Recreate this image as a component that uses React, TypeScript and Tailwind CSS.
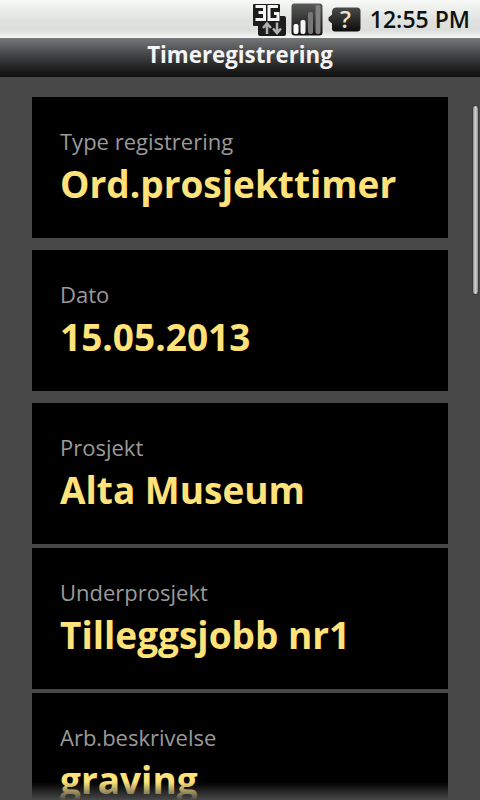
const rows = [
  { label: "Type registrering", value: "Ord.prosjekttimer", gap: "mb-3" },
  { label: "Dato", value: "15.05.2013", gap: "mb-3" },
  { label: "Prosjekt", value: "Alta Museum", gap: "mb-1" },
  { label: "Underprosjekt", value: "Tilleggsjobb nr1", gap: "mb-1" },
  { label: "Arb.beskrivelse", value: "graving", gap: "" },
]

const NetworkIcon = () => (
  <svg width="34" height="34" viewBox="0 0 34 34">
    <path d="M2 2h25a1 1 0 0 1 1 1v11h4a2 2 0 0 1 2 2v16a2 2 0 0 1-2 2H8a2 2 0 0 1-2-2v-8H2a1 1 0 0 1-1-1V3a1 1 0 0 1 1-1z" fill="#1c1c1c" />
    <path d="M3.500 4.500h9v6h-6M12.500 10.500v7h-9" fill="none" stroke="#f4f4f4" strokeWidth="3" />
    <path d="M26 4.500h-9v13h9v-6h-4" fill="none" stroke="#f4f4f4" strokeWidth="3" />
    <path d="M15 32v-10M11 26l4-4.500 4 4.500" fill="none" stroke="#b0b0b0" strokeWidth="2.500" />
    <path d="M25 20.500v10M21 26.500l4 4.500 4-4.500" fill="none" stroke="#b0b0b0" strokeWidth="2.500" />
  </svg>
)

const SignalIcon = () => (
  <svg width="32" height="33" viewBox="0 0 32 33">
    <defs>
      <linearGradient id="sig" x1="0" y1="0" x2="0" y2="1">
        <stop offset="0" stopColor="#5a5a5a" />
        <stop offset="1" stopColor="#111" />
      </linearGradient>
    </defs>
    <rect x="0.500" y="0.500" width="31" height="32" rx="3" fill="url(#sig)" />
    <rect x="2.500" y="21" width="5" height="10" rx="2" fill="#fff" />
    <rect x="9.500" y="17" width="5" height="14" rx="2" fill="#f4f4f4" />
    <rect x="17" y="9" width="5" height="22" rx="2" fill="#777" />
    <rect x="24.500" y="2" width="5" height="29" rx="2" fill="#808080" />
  </svg>
)

const UnknownSimIcon = () => (
  <svg width="33" height="25" viewBox="0 0 33 25">
    <defs>
      <linearGradient id="sim" x1="0" y1="0" x2="0" y2="1">
        <stop offset="0" stopColor="#4a4a4a" />
        <stop offset="1" stopColor="#0c0c0c" />
      </linearGradient>
    </defs>
    <path d="M8 0.500h21a3.500 3.500 0 0 1 3.500 3.500v17a3.500 3.500 0 0 1-3.500 3.500H7a3 3 0 0 1-3-3v-5l-3.500-3v-3l3.500-3V5a4.500 4.500 0 0 1 4-4.500z" fill="url(#sim)" />
    <text x="17.500" y="21" textAnchor="middle" fontFamily="'Open Sans', sans-serif" fontWeight="600" fontSize="24" fill="#e8e4c8">?</text>
  </svg>
)

export default function App() {
  return (
    <div className="relative w-[480px] h-[800px] overflow-hidden flex flex-col bg-[#484848] font-['Open_Sans','Noto_Sans',sans-serif]">
      <div className="h-[38px] shrink-0 flex items-center justify-end pr-[10px] bg-[linear-gradient(#f8faf8,#dfe1de_55%,#dcdedb_80%,#f5f7f5)]">
        <div className="flex items-center">
          <NetworkIcon />
          <div className="ml-[5px]"><SignalIcon /></div>
          <div className="ml-[5px]"><UnknownSimIcon /></div>
          <span className="ml-[9px] text-[23px] font-semibold leading-none text-[#111] whitespace-nowrap">12:55 PM</span>
        </div>
      </div>
      <div className="h-[39px] shrink-0 flex items-center justify-center bg-[linear-gradient(#777879,#4e4f50_35%,#2a2a2a_70%,#141414_95%)] border-b border-[#111]">
        <span className="text-[22.3px] font-bold leading-none text-[#f4f4f4] mb-[4px]">Timeregistrering</span>
      </div>
      <div className="flex-1 pt-5 px-8 overflow-hidden">
        {rows.map((row) => (
          <div key={row.label} className={`h-[141px] bg-black pl-7 pt-[28px] ${row.gap}`}>
            <div className="text-[22px] leading-[32px] text-[#9a9a9a] whitespace-nowrap">{row.label}</div>
            <div className="text-[37px] leading-[53px] font-bold text-[#ffe27a] whitespace-nowrap">{row.value}</div>
          </div>
        ))}
      </div>
      <div className="absolute right-[1px] top-[105px] w-[7px] h-[190px] rounded-full bg-[linear-gradient(90deg,#8c8c8c,#d0d0d0_50%,#8c8c8c)] border border-[#3a3a3a]" />
      <div className="absolute left-0 right-0 bottom-0 h-[18px] bg-[linear-gradient(transparent,#484848)]" />
    </div>
  )
}
